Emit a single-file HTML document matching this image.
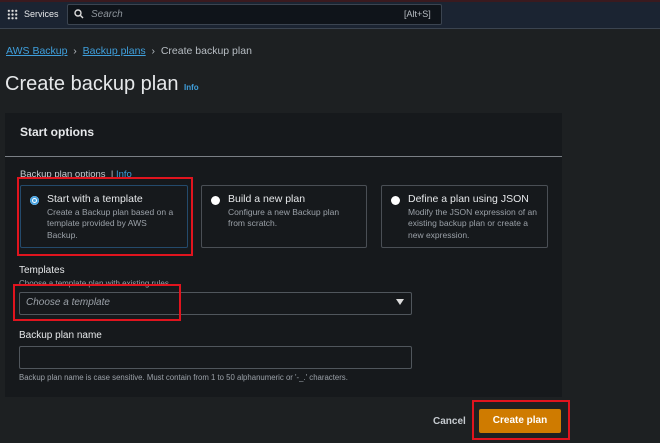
<!DOCTYPE html>
<html><head><style>
*{box-sizing:border-box;margin:0;padding:0}
body{width:660px;height:443px;background:#1d2022;font-family:"Liberation Sans",sans-serif;position:relative;overflow:hidden;color:#d1d5db}
.a{position:absolute}
.top{left:0;top:0;width:660px;height:29px;background:#1b2432;border-top:2px solid #3a1a1f;border-bottom:1px solid #3b4450}
.search{left:67px;top:4px;width:375px;height:21px;background:#0f141a;border:1px solid #3b4450;border-radius:2px}
.lnk{color:#3f9fdc;text-decoration:underline}
.panel{left:5px;top:113px;width:557px;height:284px;background:#16191c}
.card{top:185px;height:63px;border:1px solid #4a4f55;border-radius:2px;background:#16191c;padding:8px 12px 0 26px;font-size:8.5px;line-height:11.5px;color:#9ba1a8}
.card b{display:block;font-weight:normal;font-size:10.5px;color:#e6e8ea;margin-bottom:1px}
.rad{position:absolute;left:9px;top:10px;width:9px;height:9px;border-radius:50%;background:#fff}
.box{left:19px;width:393px;height:23px;border:1px solid #50565c;border-radius:2px;background:#16191c}
.red{border:2px solid #e0141e}
</style></head><body>
<div class="a top"></div>
<div class="a" style="left:7px;top:9px;width:11px;height:11px;background:radial-gradient(circle,#ddd 1px,transparent 1.3px) 0 0/3.7px 3.7px"></div>
<div class="a" style="left:24px;top:9px;font-size:9px;color:#e6e8ea">Services</div>
<div class="a search"></div>
<svg class="a" style="left:74px;top:9px" width="10" height="10"><circle cx="4" cy="4" r="3" fill="none" stroke="#ddd" stroke-width="1.4"/><path d="M6.5 6.5L9 9" stroke="#ddd" stroke-width="1.4"/></svg>
<div class="a" style="left:91px;top:9px;font-size:10px;font-style:italic;color:#8d949b">Search</div>
<div class="a" style="left:404px;top:9px;font-size:9px;color:#b8bec4">[Alt+S]</div>
<div class="a" style="left:6px;top:45px;font-size:10.5px;color:#b8bec4"><span class="lnk">AWS Backup</span> &nbsp;&#8250;&nbsp; <span class="lnk">Backup plans</span> &nbsp;&#8250;&nbsp; Create backup plan</div>
<div class="a" style="left:5px;top:73px;font-size:20px;color:#e6e8ea">Create backup plan <span style="font-size:8px;color:#3f9fdc;font-weight:bold">Info</span></div>
<div class="a panel"></div>
<div class="a" style="left:20px;top:125px;font-size:12px;font-weight:bold;color:#e6e8ea">Start options</div>
<div class="a" style="left:5px;top:156px;width:557px;height:1px;background:#7a7f85"></div>
<div class="a" style="left:20px;top:169px;font-size:9.5px;color:#c6cbd0">Backup plan options &nbsp;| <span style="color:#3f9fdc">Info</span></div>
<div class="a card" style="left:20px;width:168px;border-color:#244a6b"><div class="rad" style="background:#4aa3e0;box-shadow:inset 0 0 0 2px #4aa3e0,inset 0 0 0 3px #fff"></div><b>Start with a template</b>Create a Backup plan based on a template provided by AWS Backup.</div>
<div class="a card" style="left:201px;width:166px"><div class="rad"></div><b>Build a new plan</b>Configure a new Backup plan from scratch.</div>
<div class="a card" style="left:381px;width:167px;padding-right:8px"><div class="rad"></div><b>Define a plan using JSON</b>Modify the JSON expression of an existing backup plan or create a new expression.</div>
<div class="a" style="left:19px;top:265px;font-size:10px;color:#e6e8ea">Templates</div>
<div class="a" style="left:19px;top:279px;font-size:8px;color:#9ba1a8">Choose a template plan with existing rules</div>
<div class="a box" style="top:292px"></div>
<div class="a" style="left:26px;top:297px;font-size:10px;font-style:italic;color:#9ba1a8">Choose a template</div>
<div class="a" style="left:396px;top:299px;width:0;height:0;border-left:4px solid transparent;border-right:4px solid transparent;border-top:6px solid #ddd"></div>
<div class="a" style="left:19px;top:330px;font-size:10px;color:#e6e8ea">Backup plan name</div>
<div class="a box" style="top:346px"></div>
<div class="a" style="left:19px;top:373px;font-size:7.8px;color:#9ba1a8">Backup plan name is case sensitive. Must contain from 1 to 50 alphanumeric or '-_.' characters.</div>
<div class="a" style="left:433px;top:416px;font-size:10px;color:#c6cbd0;font-weight:bold">Cancel</div>
<div class="a" style="left:479px;top:409px;width:82px;height:24px;background:#cf7b00;border-radius:2px;color:#fff;font-size:10px;font-weight:bold;text-align:center;line-height:24px">Create plan</div>
<div class="a red" style="left:17px;top:177px;width:176px;height:79px"></div>
<div class="a red" style="left:13px;top:284px;width:168px;height:37px"></div>
<div class="a red" style="left:472px;top:400px;width:98px;height:40px"></div>
</body></html>
